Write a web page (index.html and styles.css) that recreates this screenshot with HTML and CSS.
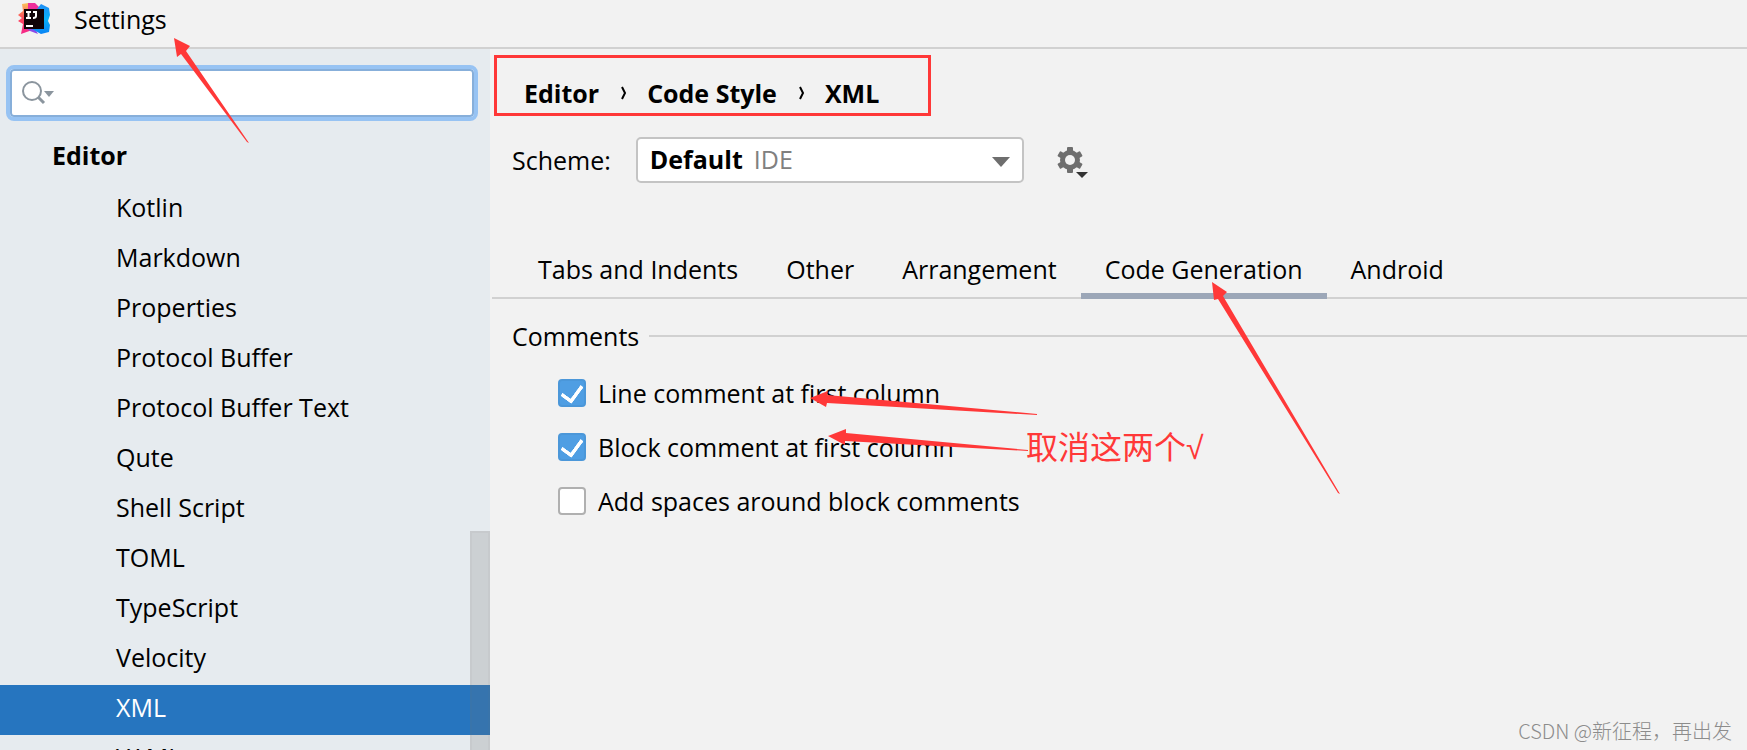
FILE: index.html
```html
<!DOCTYPE html>
<html lang="en">
<head>
  <meta charset="UTF-8" />
  <meta name="viewport" content="width=device-width, initial-scale=1.0"/>
  <title>Settings</title>
  <link rel="stylesheet" href="styles.css">
</head>
<body>

  <header class="titlebar">
    <svg class="logo" width="32" height="32" viewBox="0 0 32 32">
      <defs>
        <linearGradient id="warm" x1="0" y1="0" x2="0" y2="1">
          <stop offset="0" stop-color="#fbc45c"/>
          <stop offset="0.5" stop-color="#fc4a5c"/>
          <stop offset="1" stop-color="#f5258c"/>
        </linearGradient>
        <linearGradient id="cool" x1="0" y1="0" x2="0" y2="1">
          <stop offset="0" stop-color="#1f8df5"/>
          <stop offset="0.5" stop-color="#08b0f8"/>
          <stop offset="1" stop-color="#0a84f5"/>
        </linearGradient>
      </defs>
      <path fill="url(#warm)" d="M4 1 10 0 17 4 17 26 3 31 5 21 0 18 4 15 0 12 5 8Z"/>
      <path fill="#ee2f9a" d="M10 0 17 0 24 7 10 9Z"/>
      <path fill="#8b4be8" d="M6 24 16 24 20 31 12 28Z"/>
      <path fill="url(#cool)" d="M19 6 23 1 31 5 32 12 30 18 32 22 31 29 23 31 14 26 24 25Z"/>
      <rect x="6" y="6" width="20" height="20" fill="#100408"/>
      <path fill="none" stroke="#fff" stroke-width="2" d="M8 9H13M10.500 9V15M8 15H13M15 9H19M18 9V13Q18 15 15 15"/>
      <path stroke="#fff" stroke-width="2" d="M8 23H15"/>
    </svg>
    <h1 class="title">Settings</h1>
  </header>

  <div class="window">
    <aside class="sidebar">
      <div class="search">
        <svg class="search-icon" width="34" height="26" viewBox="0 0 34 26">
          <circle cx="12" cy="11" r="9" fill="none" stroke="#8b959e" stroke-width="2"/>
          <path d="M18 17 24 23" stroke="#8b959e" stroke-width="3"/>
          <path d="M24 11H34L29 17Z" fill="#8b959e"/>
        </svg>
        <input type="text" class="search-input" aria-label="Search settings" />
      </div>
      <h2 class="group">Editor</h2>
      <ul class="tree">
        <li><a href="#" class="tree-item">Kotlin</a></li>
        <li><a href="#" class="tree-item">Markdown</a></li>
        <li><a href="#" class="tree-item">Properties</a></li>
        <li><a href="#" class="tree-item">Protocol Buffer</a></li>
        <li><a href="#" class="tree-item">Protocol Buffer Text</a></li>
        <li><a href="#" class="tree-item">Qute</a></li>
        <li><a href="#" class="tree-item">Shell Script</a></li>
        <li><a href="#" class="tree-item">TOML</a></li>
        <li><a href="#" class="tree-item">TypeScript</a></li>
        <li><a href="#" class="tree-item">Velocity</a></li>
        <li><a href="#" class="tree-item selected">XML</a></li>
        <li><a href="#" class="tree-item">YAML</a></li>
      </ul>
      <div class="scroll-thumb"></div>
    </aside>

    <main class="content">
      <nav class="breadcrumb">
        <span>Editor</span>
        <svg width="8" height="14" viewBox="0 0 8 14"><path class="chevron" d="M3 1 6 7 3 13"/></svg>
        <span>Code Style</span>
        <svg width="8" height="14" viewBox="0 0 8 14"><path class="chevron" d="M3 1 6 7 3 13"/></svg>
        <span>XML</span>
      </nav>

      <div class="scheme">
        <label for="scheme">Scheme:</label>
        <div class="select-box">
          <select id="scheme" class="scheme-select">
            <option>Default</option>
          </select>
          <span class="scheme-level">IDE</span>
          <svg class="select-arrow" width="18" height="10" viewBox="0 0 18 10"><path d="M0 0H18L9 10Z" fill="#6e6e6e"/></svg>
        </div>
        <button class="gear" aria-label="Scheme actions">
          <svg width="32" height="32" viewBox="0 0 32 32">
            <g fill="#6e6e6e">
              <rect x="10" y="0" width="6" height="26" rx="1"/>
              <rect x="10" y="0" width="6" height="26" rx="1" transform="rotate(60 13 13)"/>
              <rect x="10" y="0" width="6" height="26" rx="1" transform="rotate(120 13 13)"/>
              <circle cx="13" cy="13" r="10"/>
            </g>
            <circle cx="13" cy="13" r="5" fill="#f2f2f2"/>
            <path d="M19 25H31L25 31Z" fill="#333"/>
          </svg>
        </button>
      </div>

      <div class="tabs" role="tablist">
        <button class="tab" role="tab">Tabs and Indents</button>
        <button class="tab" role="tab">Other</button>
        <button class="tab" role="tab">Arrangement</button>
        <button class="tab active" role="tab" aria-selected="true">Code Generation</button>
        <button class="tab" role="tab">Android</button>
      </div>

      <section class="options">
        <h3 class="options-title">Comments</h3>
        <label class="option"><input type="checkbox" class="check" checked />Line comment at first column</label>
        <label class="option"><input type="checkbox" class="check" checked />Block comment at first column</label>
        <label class="option"><input type="checkbox" class="check" />Add spaces around block comments</label>
      </section>
    </main>
  </div>

  <!-- Red marks drawn over the dialog -->
  <svg class="marks" width="1747" height="750" viewBox="0 0 1747 750">
    <rect x="495.500" y="56.500" width="434" height="58" fill="none" stroke="#ff3838" stroke-width="3"/>
    <g fill="#ff3838">
      <path d="M174 38 190 46 186 51 249 143 247 142 181 54 177 57Z"/>
      <path d="M1212 282 1227 292 1223 296 1340 494 1338 493 1218 299 1214 300Z"/>
      <path d="M810 398 828 391 827 395 1037 414 1037 415 827 403 826 407Z"/>
      <path d="M828 436 846 429 846 433 1028 450 1028 451 845 441 845 445Z"/>
    </g>
  </svg>
  <p class="note">取消这两个√</p>
  <p class="watermark">CSDN @新征程，再出发</p>

</body>
</html>
```
FILE: styles.css
```css
* {
  box-sizing: border-box;
}
body {
  margin: 0;
  height: 100vh;
  display: flex;
  flex-direction: column;
  position: relative;
  overflow: hidden;
  font-family: 'Open Sans', 'Noto Sans CJK SC', sans-serif;
  font-size: 25px;
  line-height: 34px;
  background: #f2f2f2;
  color: #000;
}
h1, h2, h3, p, ul {
  margin: 0;
  padding: 0;
  font-size: inherit;
  font-weight: 400;
}
button, input, select {
  font: inherit;
  color: inherit;
}
.titlebar {
  flex: none;
  height: 49px;
  padding: 0 18px 10px;
  display: flex;
  align-items: center;
  gap: 24px;
  border-bottom: 2px solid #d1d1d1;
}
.window {
  flex: 1;
  min-height: 0;
  display: flex;
}

/* sidebar */
.sidebar {
  flex: 0 0 490px;
  position: relative;
  overflow: hidden;
  padding-top: 16px;
  background: #e6ebef;
}
.search {
  display: flex;
  align-items: center;
  height: 56px;
  margin: 0 12px 0 6px;
  padding-left: 10px;
  background: #fff;
  border: 4px solid #97c3f3;
  border-radius: 8px;
  box-shadow: inset 0 0 0 2px #87afda;
}
.search-icon {
  flex: none;
}
.search-input {
  flex: 1;
  min-width: 0;
  margin: 0 8px;
  border: none;
  outline: none;
  background: transparent;
}
.group {
  height: 52px;
  margin-top: 12px;
  padding-left: 52px;
  line-height: 44px;
  font-weight: 700;
}
.tree {
  list-style: none;
}
.tree-item {
  display: block;
  padding-left: 116px;
  line-height: 44px;
  height: 50px;
  color: #000;
  text-decoration: none;
}
.tree-item.selected {
  background: #2675bf;
  color: #fff;
}
.scroll-thumb {
  position: absolute;
  right: 0;
  top: 482px;
  bottom: 0;
  width: 20px;
  background: rgba(115, 115, 115, 0.22);
  border: 2px solid rgba(115, 115, 115, 0.06);
  border-bottom: none;
}

/* content */
.content {
  flex: 1;
  min-width: 0;
  padding: 27px 0 0 2px;
}
.breadcrumb {
  display: flex;
  align-items: center;
  gap: 20px;
  padding-left: 32px;
  font-weight: 700;
}
.chevron {
  fill: none;
  stroke: #000;
  stroke-width: 2;
}
.scheme {
  display: flex;
  align-items: center;
  margin-top: 27px;
  padding-left: 20px;
}
.select-box {
  position: relative;
  width: 388px;
  margin: 0 33px 0 25px;
}
.scheme-select {
  display: block;
  width: 100%;
  height: 46px;
  padding: 0 0 2px 12px;
  appearance: none;
  background: #fff;
  border: 2px solid #c4c4c4;
  border-radius: 5px;
  font-weight: 700;
}
.scheme-level {
  position: absolute;
  left: 118px;
  top: 5px;
  color: #808080;
  pointer-events: none;
}
.select-arrow {
  position: absolute;
  right: 14px;
  top: 20px;
  pointer-events: none;
}
.gear {
  display: flex;
  padding: 6px 0 0;
  border: none;
  background: none;
}
.tabs {
  display: flex;
  margin-top: 58px;
  padding-left: 22px;
  height: 58px;
  border-bottom: 2px solid #d1d1d1;
}
.tab {
  height: 58px;
  padding: 4px 24px 0;
  border: none;
  border-bottom: 6px solid transparent;
  background: none;
}
.tab.active {
  border-bottom-color: #9ca7b8;
}
.options {
  padding: 20px 0 0 20px;
}
.options-title {
  display: flex;
  align-items: center;
  gap: 10px;
  margin-bottom: 13px;
}
.options-title::after {
  content: '';
  flex: 1;
  height: 2px;
  background: #d1d1d1;
}
.option {
  display: flex;
  align-items: center;
  gap: 12px;
  width: fit-content;
  height: 54px;
  padding-left: 46px;
}
.check {
  appearance: none;
  display: grid;
  place-items: center;
  width: 28px;
  height: 28px;
  margin: 0;
  background: #fff;
  border: 2px solid #b0b0b0;
  border-radius: 4px;
}
.check:checked {
  background: #4f9ee3;
  border-color: #4b97d9;
}
.check:checked::after {
  content: '';
  width: 10px;
  height: 17px;
  margin-bottom: 4px;
  border: solid #fff;
  border-width: 0 4px 4px 0;
  border-radius: 2px;
  transform: rotate(36deg);
}

/* marks over the dialog */
.marks {
  position: absolute;
  left: 0;
  top: 0;
  pointer-events: none;
}
.note {
  position: absolute;
  left: 1026px;
  top: 431px;
  font-family: 'Liberation Sans', 'Noto Sans CJK SC', sans-serif;
  font-size: 32px;
  color: #ff3838;
}
.watermark {
  position: absolute;
  right: 15px;
  bottom: 2px;
  font-family: 'Noto Sans CJK SC', sans-serif;
  font-weight: 300;
  font-size: 20px;
  color: #8c8c8c;
}
```
